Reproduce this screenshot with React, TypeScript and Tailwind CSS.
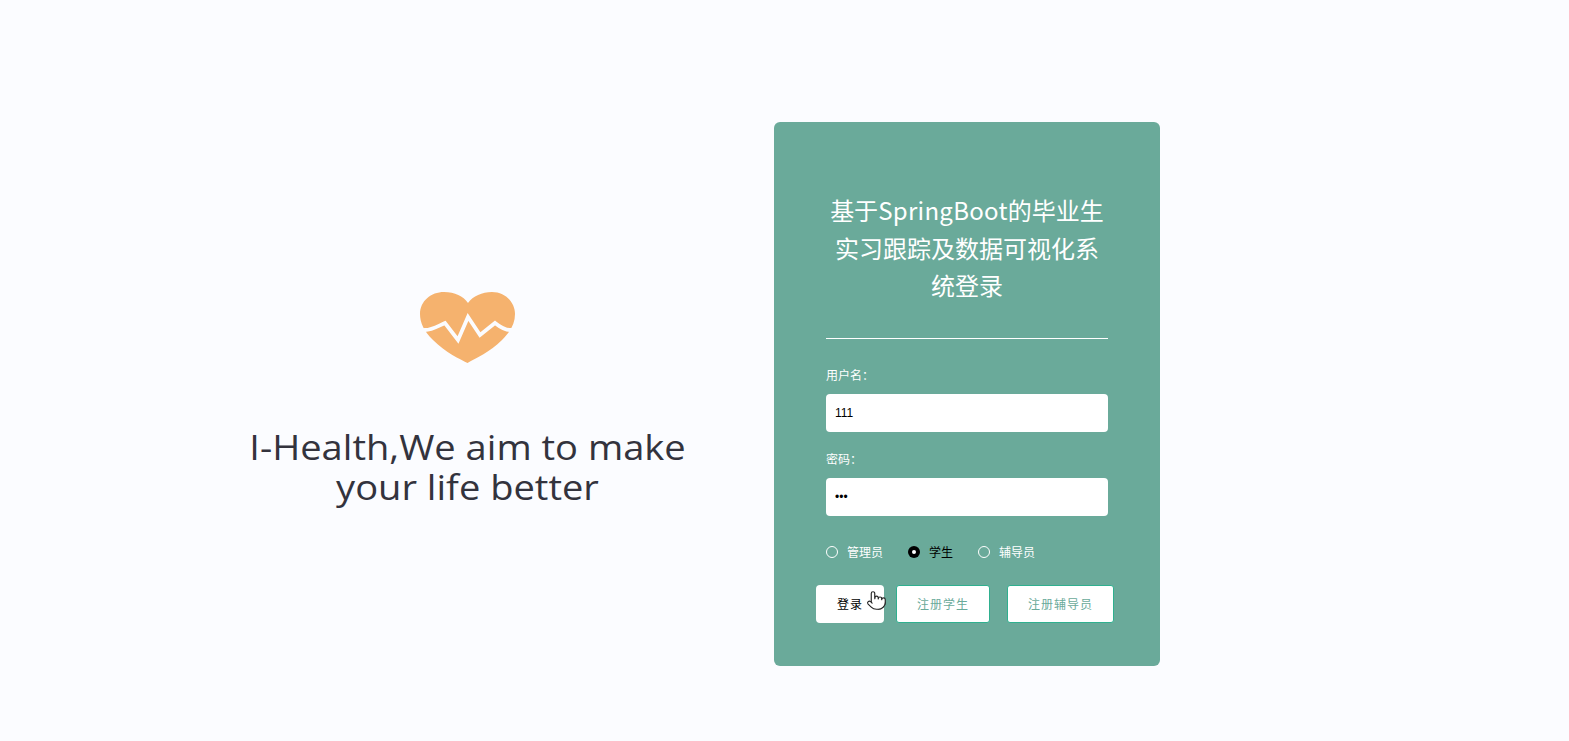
import { Pointer } from "lucide-react";

const sans = "font-['Noto_Sans_CJK_SC','Noto_Sans',sans-serif]";

function HeartLogo() {
  return (
    <svg width="96" height="72" viewBox="20 12 96 72" className="block ml-[2px]">
      <path
        d="M67.5 83 C60 79 46 73 33 60 C24 51 20 43 20 34 C20 21 31 12 44 12 C55 12 63 16 68 23 C73 16 82 12 92 12 C105 12 115 22 115 34 C115 43 111 51 102 60 C90 72 76 78 67.5 83 Z"
        fill="#f5b26e"
      />
      <path
        d="M18 51 L25 50 C32 50 38 46 45 43 L58 60 L68 37 L80 55 L95 43 C100 47 105 50 110 50 L118 50"
        fill="none"
        stroke="#fbfcff"
        strokeWidth="3.8"
      />
    </svg>
  );
}

function Radio({ label, checked }: { label: string; checked?: boolean }) {
  return (
    <label className={`flex items-center gap-[9px] text-[12px] leading-none ${checked ? "text-black" : "text-white"}`}>
      {checked ? (
        <span className="w-[12px] h-[12px] rounded-full bg-black flex items-center justify-center">
          <span className="w-[4px] h-[4px] rounded-full bg-white" />
        </span>
      ) : (
        <span className="w-[12px] h-[12px] rounded-full border border-white" />
      )}
      {label}
    </label>
  );
}

export default function App() {
  return (
    <div className={`min-h-screen h-[741px] overflow-hidden bg-[#fbfcff] flex items-start pt-[122px] pl-[247px] ${sans}`}>
      {/* Left side */}
      <div className="w-[440px] h-[544px] mr-[87px] flex flex-col items-center pt-[170px]">
        <HeartLogo />
        <h2 className="mt-[63px] w-[395px] scale-x-[1.12] text-center text-[#33333d] text-[34px] leading-[40px] font-['Open_Sans',sans-serif]">
          I-Health,We aim to make your life better
        </h2>
      </div>

      {/* Login card */}
      <div className="w-[386px] h-[544px] shrink-0 bg-[#6aaa9a] rounded-[6px] px-[52px] pt-[69px]">
        <h1 className="text-white text-[24px] leading-[37.5px] text-center border-b border-white pb-[34px]">
          基于<span className="tracking-[0.3px]">SpringBoot</span>的毕业生实习跟踪及数据可视化系统登录
        </h1>

        <label className="block mt-[27px] text-white text-[12px] leading-[18px]">用户名：</label>
        <input
          readOnly
          value="111"
          className="mt-[10px] block w-full h-[38px] bg-white rounded-[4px] px-[9px] text-[12px] text-black font-['Liberation_Sans',sans-serif] outline-none"
        />

        <label className="block mt-[18px] text-white text-[12px] leading-[18px]">密码：</label>
        <input
          readOnly
          type="password"
          value="111"
          className="mt-[10px] block w-full h-[38px] bg-white rounded-[4px] px-[9px] text-[12px] text-black font-['Liberation_Sans',sans-serif] outline-none"
        />

        <div className="mt-[30px] flex items-center gap-[25px] h-[12px]">
          <Radio label="管理员" />
          <Radio label="学生" checked />
          <Radio label="辅导员" />
        </div>

        <div className="mt-[27px] -mx-[10px] w-[300px] flex gap-[12px]">
          <button className="relative w-[68px] h-[38px] bg-white rounded-[4px] text-[12px] tracking-[1px] text-black">
            登录
            <Pointer size={21} strokeWidth={1.3} className="absolute left-[50px] top-[5px] text-[#222] fill-white" />
          </button>
          <button className="w-[94px] h-[38px] bg-white rounded-[3px] border border-[#2fb08f] text-[12px] tracking-[1px] text-[#6aaa9a]">
            注册学生
          </button>
          <button className="ml-[5px] w-[107px] shrink-0 h-[38px] bg-white rounded-[3px] border border-[#2fb08f] text-[12px] tracking-[1px] text-[#6aaa9a]">
            注册辅导员
          </button>
        </div>
      </div>
    </div>
  );
}
